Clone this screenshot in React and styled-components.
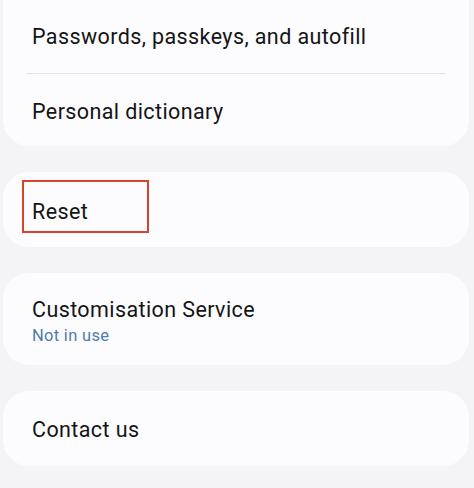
import React from "react";
import styled, { createGlobalStyle } from "styled-components";

const Global = createGlobalStyle`
  html, body { margin: 0; padding: 0; background: #f4f4f6; }
  body { font-family: Roboto, "Noto Sans", sans-serif; -webkit-font-smoothing: antialiased; }
`;

const Page = styled.div`
  width: 474px;
  height: 488px;
  box-sizing: border-box;
  padding: 0 5px 0 3px;
  display: flex;
  flex-direction: column;
  gap: 26px;
  background: #f4f4f6;
  overflow: hidden;
`;

const Card = styled.div`
  background: #fcfcfe;
  border-radius: ${(p) => (p.$cutTop ? "0 0 26px 26px" : "26px")};
  display: flex;
  flex-direction: column;
`;

const Row = styled.div`
  height: ${(p) => p.$h || 74}px;
  box-sizing: border-box;
  padding: ${(p) => p.$pt ?? 4}px 29px 0;
  display: flex;
  flex-direction: column;
  justify-content: center;
  position: relative;
`;

const Divider = styled.div`
  height: 1px;
  margin: 0 24px;
  background: #e3e3e6;
`;

const Title = styled.span`
  font-size: 21.5px;
  color: #141414;
  line-height: 26px;
  letter-spacing: 0.4px;
`;

const Sub = styled.span`
  font-size: 16.5px;
  color: #4f7bab;
  line-height: 22px;
  margin-top: 2px;
  letter-spacing: 0.3px;
`;

const Highlight = styled.div`
  position: absolute;
  left: 19px;
  top: 8px;
  width: 127px;
  height: 53px;
  box-sizing: border-box;
  border: 2.5px solid #d8432a;
  pointer-events: none;
`;

export default function App() {
  return (
    <>
      <Global />
      <Page>
        <Card $cutTop>
          <Row $h={73} $pt={1}>
            <Title>Passwords, passkeys, and autofill</Title>
          </Row>
          <Divider />
          <Row $h={72}>
            <Title>Personal dictionary</Title>
          </Row>
        </Card>
        <Card>
          <Row $h={75}>
            <Title>Reset</Title>
            <Highlight />
          </Row>
        </Card>
        <Card>
          <Row $h={92} $pt={5}>
            <Title>Customisation Service</Title>
            <Sub>Not in use</Sub>
          </Row>
        </Card>
        <Card>
          <Row $h={75} $pt={2}>
            <Title>Contact us</Title>
          </Row>
        </Card>
      </Page>
    </>
  );
}
